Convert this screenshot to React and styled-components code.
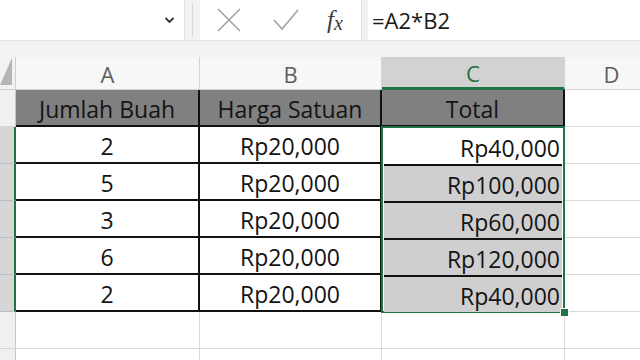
import styled, { createGlobalStyle } from "styled-components";

const GlobalStyle = createGlobalStyle`
  body {
    margin: 0;
    background: #f2f2f2;
    font-family: "Open Sans", "Noto Sans", sans-serif;
  }
`;

const rows = [
  { a: "2", b: "Rp20,000", c: "Rp40,000" },
  { a: "5", b: "Rp20,000", c: "Rp100,000" },
  { a: "3", b: "Rp20,000", c: "Rp60,000" },
  { a: "6", b: "Rp20,000", c: "Rp120,000" },
  { a: "2", b: "Rp20,000", c: "Rp40,000" },
];

const Page = styled.div`
  width: 640px;
  height: 360px;
  overflow: hidden;
  background: #ffffff;
  display: flex;
  flex-direction: column;
`;

const TopBar = styled.div`
  height: 40px;
  flex-shrink: 0;
  display: flex;
  background: #f2f2f2;
  border-bottom: 1px solid #e2e2e2;
`;

const NameBox = styled.div`
  width: 185px;
  background: #ffffff;
  display: flex;
  align-items: center;
  justify-content: flex-end;
  padding-right: 9px;
  box-sizing: border-box;
  border-right: 1px solid #e0e0e0;
`;

const Splitter = styled.div`
  width: ${(p) => p.w}px;
  display: flex;
  justify-content: center;
`;

const Tools = styled.div`
  width: 162px;
  background: #ffffff;
  display: flex;
  align-items: center;
  padding-left: 17px;
  gap: 32px;
  box-sizing: border-box;
  border-right: 1px solid #e0e0e0;
`;

const Fx = styled.span`
  font-family: "Liberation Serif", serif;
  font-style: italic;
  font-size: 25px;
  color: #3c3c3c;
  margin-left: -4px;
  sub {
    font-size: 20px;
    vertical-align: -2px;
  }
`;

const Formula = styled.div`
  flex: 1;
  background: #ffffff;
  display: flex;
  align-items: center;
  padding-left: 4px;
  font-size: 22px;
  color: #1a1a1a;
`;

const Strip = styled.div`
  height: 16px;
  flex-shrink: 0;
  background: #f2f2f2;
`;

const Sheet = styled.div`
  display: grid;
  flex-shrink: 0;
  grid-template-columns: 16px 184px 182px 183px 94px 1fr;
  grid-template-rows: 33px repeat(8, 37px);
`;

const Corner = styled.div`
  background: #f2f2f2;
  border-right: 1px solid #cfcfcf;
  border-bottom: 1px solid #cfcfcf;
  display: flex;
  align-items: flex-end;
  justify-content: flex-end;
  padding: 2px 3px 4px 0;
`;

const ColHead = styled.div`
  display: flex;
  align-items: center;
  justify-content: center;
  padding-top: 2px;
  font-size: 22px;
  background: ${(p) => (p.$active ? "#d2d2d2" : "#f7f7f7")};
  color: ${(p) => (p.$active ? "#1e7145" : "#5e5e5e")};
  border-right: 1px solid #d4d4d4;
  border-bottom: ${(p) => (p.$active ? "3px solid #217346" : "1px solid #d4d4d4")};
  box-sizing: border-box;
`;

const RowHead = styled.div`
  background: ${(p) => (p.$active ? "#d6d6d6" : "#f0f0f0")};
  border-right: ${(p) => (p.$active ? "2px solid #217346" : "1px solid #c8c8c8")};
  border-bottom: 1px solid ${(p) => (p.$active ? "#bdbdbd" : "#d4d4d4")};
  box-sizing: border-box;
`;

const Cell = styled.div`
  display: flex;
  align-items: center;
  justify-content: center;
  padding-top: 3px;
  font-size: 23px;
  color: #141414;
  box-sizing: border-box;
  background: ${(p) => (p.$head ? "#808080" : "#ffffff")};
  border-right: ${(p) => (p.$table ? "2px solid #111" : "1px solid #d9d9d9")};
  border-bottom: ${(p) => (p.$table ? "2px solid #111" : "1px solid #d9d9d9")};
`;

const Selection = styled.div`
  grid-column: 4;
  grid-row: 3 / span 5;
  position: relative;
  border: 2px solid #217346;
  padding: 1px;
  margin: -1px 0 -1px -1px;
  display: flex;
  flex-direction: column;
`;

const SelCell = styled.div`
  flex: 1;
  display: flex;
  align-items: center;
  justify-content: flex-end;
  padding: 3px 2px 0 0;
  font-size: 23px;
  color: #141414;
  background: ${(p) => (p.$current ? "#ffffff" : "#cfcfcf")};
  border-bottom: ${(p) => (p.$last ? "none" : "2px solid #111")};
`;

const Handle = styled.div`
  position: absolute;
  right: -6px;
  bottom: -6px;
  width: 7px;
  height: 7px;
  background: #217346;
  border: 1px solid #ffffff;
`;

const Chevron = () => (
  <svg width="11" height="8" viewBox="0 0 11 8">
    <polyline points="1.5,2 5.5,6 9.5,2" fill="none" stroke="#333" strokeWidth="1.8" />
  </svg>
);

const Cross = () => (
  <svg width="24" height="24" viewBox="0 0 24 24">
    <path d="M1 1 L23 23 M23 1 L1 23" stroke="#a3a3a3" strokeWidth="1.6" fill="none" />
  </svg>
);

const Check = () => (
  <svg width="26" height="22" viewBox="0 0 26 22">
    <polyline points="1,11 9,20 25,1" stroke="#a3a3a3" strokeWidth="1.6" fill="none" />
  </svg>
);

const Triangle = () => (
  <svg width="12" height="27" viewBox="0 0 12 27">
    <polygon points="12,0 12,27 0,27" fill="#b5b5b5" />
  </svg>
);

const Dots = () => (
  <svg width="3" height="40" viewBox="0 0 3 40">
    <line x1="1.5" y1="4" x2="1.5" y2="36" stroke="#d8d8d8" strokeWidth="1" />
  </svg>
);

export default function App() {
  return (
    <Page>
      <GlobalStyle />
      <TopBar>
        <NameBox>
          <Chevron />
        </NameBox>
        <Splitter w={15}>
          <Dots />
        </Splitter>
        <Tools>
          <Cross />
          <Check />
          <Fx>
            f<sub>x</sub>
          </Fx>
        </Tools>
        <Splitter w={6} />
        <Formula>=A2*B2</Formula>
      </TopBar>
      <Strip />
      <Sheet>
        <Corner>
          <Triangle />
        </Corner>
        <ColHead>A</ColHead>
        <ColHead>B</ColHead>
        <ColHead $active>C</ColHead>
        <ColHead>D</ColHead>
        <ColHead />

        <RowHead />
        <Cell $table $head>Jumlah Buah</Cell>
        <Cell $table $head>Harga Satuan</Cell>
        <Cell $table $head>Total</Cell>
        <Cell />
        <Cell />

        <Selection>
          {rows.map((r, i) => (
            <SelCell key={i} $current={i === 0} $last={i === rows.length - 1}>
              {r.c}
            </SelCell>
          ))}
          <Handle />
        </Selection>

        {rows.map((r, i) => [
          <RowHead key={`h${i}`} $active />,
          <Cell key={`a${i}`} $table>{r.a}</Cell>,
          <Cell key={`b${i}`} $table>{r.b}</Cell>,
          <Cell key={`d${i}`} />,
          <Cell key={`e${i}`} />,
        ])}

        {[0, 1].map((i) => [
          <RowHead key={`eh${i}`} />,
          <Cell key={`ea${i}`} />,
          <Cell key={`eb${i}`} />,
          <Cell key={`ec${i}`} />,
          <Cell key={`ed${i}`} />,
          <Cell key={`ee${i}`} />,
        ])}
      </Sheet>
    </Page>
  );
}
